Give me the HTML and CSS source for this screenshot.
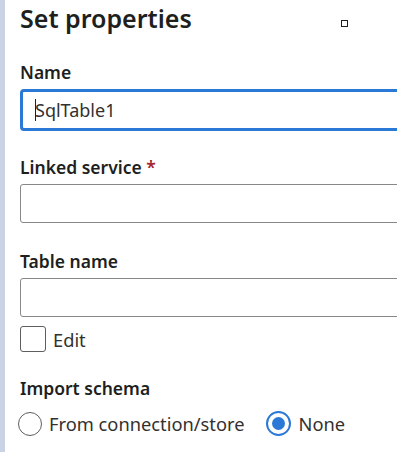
FILE: index.html
```html
<!DOCTYPE html>
<html>
<head>
<meta charset="utf-8">
<link rel="stylesheet" href="styles.css">
</head>
<body>
<div class="page">
  <div class="strip"></div>
  <div class="panel">
    <div class="title-row">
      <h1 class="title">Set properties</h1>
      <span class="mini-box"></span>
    </div>
    <label class="label label-name">Name</label>
    <div class="input focused"><span class="caret"></span><span class="value">SqlTable1</span></div>
    <label class="label label-linked">Linked service <span class="req">*</span></label>
    <div class="input"></div>
    <label class="label label-table">Table name</label>
    <div class="input"></div>
    <div class="check-row">
      <span class="checkbox"></span>
      <span class="opt-text">Edit</span>
    </div>
    <label class="label label-import">Import schema</label>
    <div class="radio-row">
      <span class="radio"></span>
      <span class="opt-text">From connection/store</span>
      <span class="radio checked"><span class="dot"></span></span>
      <span class="opt-text">None</span>
    </div>
  </div>
</div>
</body>
</html>
```
FILE: styles.css
```css
html, body {
  margin: 0;
  padding: 0;
  background: #ffffff;
}
.page {
  display: flex;
  width: 397px;
  height: 452px;
  overflow: hidden;
  font-family: "Noto Sans", "Open Sans", sans-serif;
  color: #201f1e;
}
.strip {
  width: 5px;
  flex: none;
  background: #c9d3e5;
}
.panel {
  flex: 1;
  padding-left: 15px;
  display: flex;
  flex-direction: column;
  min-width: 0;
}
.title-row {
  display: flex;
  align-items: center;
  height: 36px;
}
.title {
  margin: 0;
  font-size: 25px;
  font-weight: 600;
  line-height: 34px;
  letter-spacing: 0;
}
.mini-box {
  width: 5px;
  height: 5px;
  border: 1px solid #201f1e;
  margin-left: 149px;
  margin-top: 10px;
}
.label {
  display: block;
  font-size: 17.5px;
  font-weight: 600;
  line-height: 22px;
}
.label-name { margin-top: 25px; }
.label-linked { margin-top: 25px; }
.label-table { margin-top: 27px; }
.label-import { margin-top: 25px; }
.req { color: #a4262c; }
.input {
  box-sizing: border-box;
  width: 400px;
  height: 39px;
  border: 1px solid #8a8886;
  border-radius: 3px;
  margin-top: 6px;
  flex: none;
}
.input.focused {
  height: 42px;
  border: 3px solid #2b79d6;
  border-radius: 4px;
  display: flex;
  align-items: center;
  padding-left: 12px;
}
.caret {
  width: 1px;
  height: 22px;
  background: #201f1e;
}
.value {
  font-size: 18px;
  color: #323130;
  margin-left: -1px;
}
.check-row {
  display: flex;
  align-items: center;
  margin-top: 9px;
}
.checkbox {
  box-sizing: border-box;
  width: 26px;
  height: 26px;
  border: 1px solid #605e5c;
  border-radius: 3px;
}
.opt-text {
  font-size: 18.3px;
  color: #323130;
  margin-left: 7px;
}
.radio-row {
  display: flex;
  align-items: center;
  margin-top: 12px;
  margin-left: -2px;
}
.radio {
  box-sizing: border-box;
  width: 24px;
  height: 24px;
  border: 1px solid #605e5c;
  border-radius: 50%;
  display: flex;
  align-items: center;
  justify-content: center;
}
.radio.checked {
  width: 25px;
  height: 25px;
  border: 2px solid #2b79d6;
  margin-left: 22px;
}
.dot {
  width: 13px;
  height: 13px;
  border-radius: 50%;
  background: #2b79d6;
}
```
